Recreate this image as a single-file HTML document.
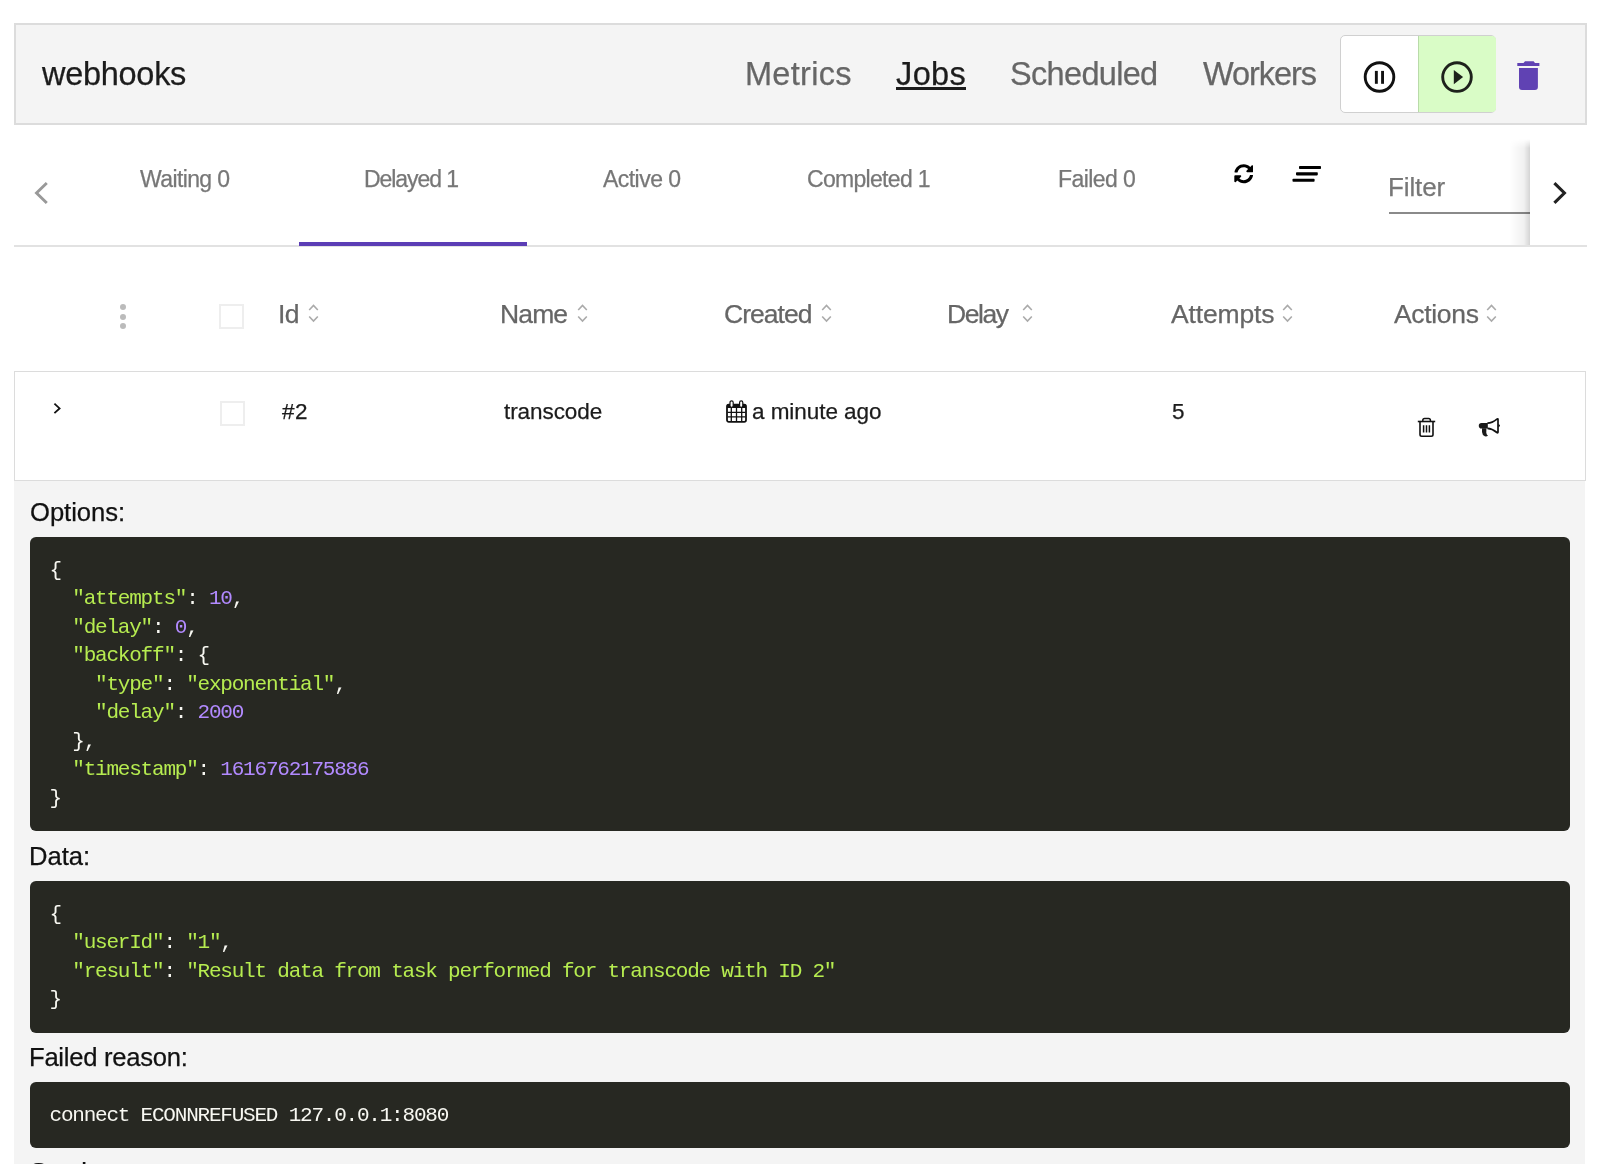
<!DOCTYPE html>
<html><head><meta charset="utf-8"><title>webhooks - Jobs</title>
<style>
html,body{margin:0;padding:0;background:#fff;width:1600px;height:1164px;overflow:hidden;position:relative;font-family:"Liberation Sans", sans-serif;}
</style></head><body>
<div style="position:absolute;left:14px;top:23px;width:1573px;height:102px;box-sizing:border-box;background:#f4f4f4;border:2px solid #dcdcdc;"></div>
<div style="position:absolute;left:41.50px;top:73.94px;font-size:32.5px;line-height:0;color:#1c1c1c;white-space:pre;letter-spacing:-0.286px;will-change:transform;-webkit-text-stroke:0.25px #1c1c1c;">webhooks</div>
<div style="position:absolute;left:744.90px;top:74.14px;font-size:32.5px;line-height:0;color:#666;white-space:pre;letter-spacing:0.300px;will-change:transform;-webkit-text-stroke:0.25px #666;">Metrics</div>
<div style="position:absolute;left:896.20px;top:74.14px;font-size:32.5px;line-height:0;color:#1c1c1c;white-space:pre;letter-spacing:0.400px;will-change:transform;-webkit-text-stroke:0.25px #1c1c1c;">Jobs</div>
<div style="position:absolute;left:896px;top:87px;width:70px;height:3px;background:#1c1c1c;"></div>
<div style="position:absolute;left:1009.60px;top:74.14px;font-size:32.5px;line-height:0;color:#666;white-space:pre;letter-spacing:-0.675px;will-change:transform;-webkit-text-stroke:0.25px #666;">Scheduled</div>
<div style="position:absolute;left:1202.90px;top:74.14px;font-size:32.5px;line-height:0;color:#666;white-space:pre;letter-spacing:-1.050px;will-change:transform;-webkit-text-stroke:0.25px #666;">Workers</div>
<div style="position:absolute;left:1340px;top:35px;width:156px;height:78px;box-sizing:border-box;border:1px solid #d0d0d0;border-radius:5px;background:#fff;overflow:hidden;"></div>
<div style="position:absolute;left:1418px;top:36px;width:77px;height:76px;background:#d9fcc6;border-left:1px solid #b9dba9;border-radius:0 4px 4px 0;"></div>
<svg style="position:absolute;left:1340px;top:35px" width="160" height="80" viewBox="0 0 160 80">
<circle cx="39.5" cy="42" r="14.3" fill="none" stroke="#111" stroke-width="2.9"/>
<rect x="34.9" y="35.9" width="2.9" height="12.9" fill="#111"/>
<rect x="41.1" y="35.9" width="2.9" height="12.9" fill="#111"/>
<circle cx="117" cy="42.1" r="14.3" fill="none" stroke="#1e211c" stroke-width="2.9"/>
<path d="M113.8 35.1 L123.1 42.1 L113.8 49.2 Z" fill="#1e211c"/>
</svg>
<svg style="position:absolute;left:1510px;top:55px" width="40" height="40" viewBox="0 0 40 40">
<path d="M7.3 8.1 H13.5 L15 6.2 H23.6 L25 8.1 H29.4 V11 H7.3 Z" fill="#6042b3"/>
<path d="M9 12.9 H27.9 V31.9 Q27.9 34.9 24.9 34.9 H12 Q9 34.9 9 31.9 Z" fill="#6042b3"/>
</svg>
<div style="position:absolute;left:140.30px;top:178.53px;font-size:23px;line-height:0;color:#777;white-space:pre;letter-spacing:-0.625px;will-change:transform;-webkit-text-stroke:0.25px #777;">Waiting 0</div>
<div style="position:absolute;left:364.10px;top:178.53px;font-size:23px;line-height:0;color:#777;white-space:pre;letter-spacing:-1.075px;will-change:transform;-webkit-text-stroke:0.25px #777;">Delayed 1</div>
<div style="position:absolute;left:602.60px;top:178.53px;font-size:23px;line-height:0;color:#777;white-space:pre;letter-spacing:-0.543px;will-change:transform;-webkit-text-stroke:0.25px #777;">Active 0</div>
<div style="position:absolute;left:806.50px;top:178.53px;font-size:23px;line-height:0;color:#777;white-space:pre;letter-spacing:-0.690px;will-change:transform;-webkit-text-stroke:0.25px #777;">Completed 1</div>
<div style="position:absolute;left:1058.30px;top:178.53px;font-size:23px;line-height:0;color:#777;white-space:pre;letter-spacing:-0.571px;will-change:transform;-webkit-text-stroke:0.25px #777;">Failed 0</div>
<div style="position:absolute;left:14px;top:245px;width:1573px;height:2px;background:#e2e2e2;"></div>
<div style="position:absolute;left:299px;top:242px;width:228px;height:4px;background:#5b3db5;"></div>
<svg style="position:absolute;left:30px;top:178px" width="24" height="30" viewBox="0 0 24 30">
<path d="M16.8 5 L6.5 15 L16.8 25" fill="none" stroke="#999" stroke-width="2.9"/>
</svg>
<svg style="position:absolute;left:1233.5px;top:164px" width="19.5" height="19.5" viewBox="0 0 512 512">
<path fill="#000" d="M370.72 133.28C339.458 104.008 298.888 87.962 255.848 88c-77.458.068-144.328 53.178-162.791 126.85-1.344 5.363-6.122 9.15-11.651 9.15H24.103c-7.498 0-13.194-6.807-11.807-14.176C33.933 94.924 134.813 8 256 8c66.448 0 126.791 26.136 171.315 68.685L463.03 40.97C478.149 25.851 504 36.559 504 57.941V192c0 13.255-10.745 24-24 24H345.941c-21.382 0-32.09-25.851-16.971-40.971l41.75-41.749zM32 296h134.059c21.382 0 32.09 25.851 16.971 40.971l-41.75 41.75c31.262 29.273 71.835 45.319 114.876 45.28 77.418-.07 144.315-53.144 162.787-126.849 1.344-5.363 6.122-9.15 11.651-9.150h57.304c7.498 0 13.194 6.807 11.807 14.176C478.067 417.076 377.187 504 256 504c-66.448 0-126.791-26.136-171.315-68.685L48.97 471.03C33.851 486.149 8 475.441 8 454.059V320c0-13.255 10.745-24 24-24z"/>
</svg>
<svg style="position:absolute;left:1290px;top:164px" width="34" height="20" viewBox="0 0 34 20">
<rect x="9" y="2.1" width="22" height="2.9" rx="0.8" fill="#000"/>
<rect x="6" y="8.3" width="21.8" height="3.1" rx="0.8" fill="#000"/>
<rect x="2.5" y="14.7" width="22.1" height="3.1" rx="0.8" fill="#000"/>
</svg>
<div style="position:absolute;left:1388.10px;top:187.09px;font-size:26px;line-height:0;color:#777;white-space:pre;letter-spacing:-0.120px;will-change:transform;-webkit-text-stroke:0.25px #777;">Filter</div>
<div style="position:absolute;left:1389px;top:212px;width:141px;height:2px;background:#8a8a8a;"></div>
<div style="position:absolute;left:1510px;top:139px;width:20px;height:106px;background:linear-gradient(to right, rgba(0,0,0,0), rgba(0,0,0,0.06) 70%, rgba(0,0,0,0.17));-webkit-mask-image:linear-gradient(to bottom, transparent 0, #000 9px);"></div>
<div style="position:absolute;left:1530px;top:139px;width:57px;height:106px;background:#fff;"></div>
<svg style="position:absolute;left:1546px;top:178px" width="24" height="30" viewBox="0 0 24 30">
<path d="M8.4 5.2 L18.4 15 L8.4 24.8" fill="none" stroke="#222" stroke-width="3.1"/>
</svg>
<div style="position:absolute;left:120.2px;top:304.0px;width:6px;height:6px;border-radius:50%;background:#bbb"></div>
<div style="position:absolute;left:120.2px;top:313.5px;width:6px;height:6px;border-radius:50%;background:#bbb"></div>
<div style="position:absolute;left:120.2px;top:322.8px;width:6px;height:6px;border-radius:50%;background:#bbb"></div>
<div style="position:absolute;left:218.5px;top:304px;width:25px;height:25px;box-sizing:border-box;border:2.5px solid #eee;"></div>
<div style="position:absolute;left:278.40px;top:313.82px;font-size:26.5px;line-height:0;color:#666;white-space:pre;letter-spacing:-0.700px;will-change:transform;-webkit-text-stroke:0.25px #666;">Id</div>
<svg style="position:absolute;left:307.5px;top:303px" width="11" height="21" viewBox="0 0 11 21"><path d="M1.2 7 L5.5 2.5 L9.8 7 M1.2 13.5 L5.5 18 L9.8 13.5" fill="none" stroke="#aaa" stroke-width="1.6"/></svg>
<div style="position:absolute;left:500.30px;top:313.82px;font-size:26.5px;line-height:0;color:#666;white-space:pre;letter-spacing:-0.867px;will-change:transform;-webkit-text-stroke:0.25px #666;">Name</div>
<svg style="position:absolute;left:577px;top:303px" width="11" height="21" viewBox="0 0 11 21"><path d="M1.2 7 L5.5 2.5 L9.8 7 M1.2 13.5 L5.5 18 L9.8 13.5" fill="none" stroke="#aaa" stroke-width="1.6"/></svg>
<div style="position:absolute;left:724.20px;top:313.82px;font-size:26.5px;line-height:0;color:#666;white-space:pre;letter-spacing:-0.983px;will-change:transform;-webkit-text-stroke:0.25px #666;">Created</div>
<svg style="position:absolute;left:820.5px;top:303px" width="11" height="21" viewBox="0 0 11 21"><path d="M1.2 7 L5.5 2.5 L9.8 7 M1.2 13.5 L5.5 18 L9.8 13.5" fill="none" stroke="#aaa" stroke-width="1.6"/></svg>
<div style="position:absolute;left:946.50px;top:313.82px;font-size:26.5px;line-height:0;color:#666;white-space:pre;letter-spacing:-1.450px;will-change:transform;-webkit-text-stroke:0.25px #666;">Delay</div>
<svg style="position:absolute;left:1021.5px;top:303px" width="11" height="21" viewBox="0 0 11 21"><path d="M1.2 7 L5.5 2.5 L9.8 7 M1.2 13.5 L5.5 18 L9.8 13.5" fill="none" stroke="#aaa" stroke-width="1.6"/></svg>
<div style="position:absolute;left:1170.80px;top:313.82px;font-size:26.5px;line-height:0;color:#666;white-space:pre;letter-spacing:-0.157px;will-change:transform;-webkit-text-stroke:0.25px #666;">Attempts</div>
<svg style="position:absolute;left:1282px;top:303px" width="11" height="21" viewBox="0 0 11 21"><path d="M1.2 7 L5.5 2.5 L9.8 7 M1.2 13.5 L5.5 18 L9.8 13.5" fill="none" stroke="#aaa" stroke-width="1.6"/></svg>
<div style="position:absolute;left:1394.00px;top:313.82px;font-size:26.5px;line-height:0;color:#666;white-space:pre;letter-spacing:-0.333px;will-change:transform;-webkit-text-stroke:0.25px #666;">Actions</div>
<svg style="position:absolute;left:1486px;top:303px" width="11" height="21" viewBox="0 0 11 21"><path d="M1.2 7 L5.5 2.5 L9.8 7 M1.2 13.5 L5.5 18 L9.8 13.5" fill="none" stroke="#aaa" stroke-width="1.6"/></svg>
<div style="position:absolute;left:14px;top:371px;width:1571.5px;height:110px;box-sizing:border-box;border:1.5px solid #dcdcdc;background:#fff;"></div>
<svg style="position:absolute;left:50px;top:400px" width="14" height="17" viewBox="0 0 14 17">
<path d="M4.4 3.6 L9.6 8.4 L4.4 13.2" fill="none" stroke="#111" stroke-width="1.8"/>
</svg>
<div style="position:absolute;left:220px;top:400.6px;width:25px;height:25px;box-sizing:border-box;border:2.5px solid #eee;"></div>
<div style="position:absolute;left:281.60px;top:411.60px;font-size:22.5px;line-height:0;color:#1c1c1c;white-space:pre;letter-spacing:0.400px;will-change:transform;-webkit-text-stroke:0.25px #1c1c1c;">#2</div>
<div style="position:absolute;left:504.10px;top:411.60px;font-size:22.5px;line-height:0;color:#1c1c1c;white-space:pre;letter-spacing:-0.075px;will-change:transform;-webkit-text-stroke:0.25px #1c1c1c;">transcode</div>
<div style="position:absolute;left:751.70px;top:411.60px;font-size:22.5px;line-height:0;color:#1c1c1c;white-space:pre;letter-spacing:-0.055px;will-change:transform;-webkit-text-stroke:0.25px #1c1c1c;">a minute ago</div>
<div style="position:absolute;left:1172.00px;top:411.60px;font-size:22.5px;line-height:0;color:#1c1c1c;white-space:pre;letter-spacing:0.000px;will-change:transform;-webkit-text-stroke:0.25px #1c1c1c;">5</div>
<svg style="position:absolute;left:726px;top:400px" width="21" height="23" viewBox="0 0 21 23">
<rect x="1" y="4.6" width="19" height="17.2" rx="1.8" fill="none" stroke="#111" stroke-width="1.8"/>
<rect x="1" y="4.6" width="19" height="3.4" fill="#111"/>
<path d="M5.3 7.5 V21 M10.5 7.5 V21 M15.7 7.5 V21 M1.5 12.3 H19.5 M1.5 16.8 H19.5" stroke="#111" stroke-width="1.3"/>
<rect x="4" y="0.8" width="3.2" height="6.6" rx="1.6" fill="#fff" stroke="#111" stroke-width="1.2"/>
<rect x="13.6" y="0.8" width="3.2" height="6.6" rx="1.6" fill="#fff" stroke="#111" stroke-width="1.2"/>
</svg>
<svg style="position:absolute;left:1416px;top:416px" width="21" height="22" viewBox="0 0 21 22">
<path d="M1.8 5.5 H19.2" stroke="#111" stroke-width="1.6"/>
<path d="M6.8 5.3 V4.2 Q6.8 2.4 8.6 2.4 H12.6 Q14.4 2.4 14.4 4.2 V5.3" fill="none" stroke="#111" stroke-width="1.5"/>
<path d="M4 6 V18.6 Q4 20.3 5.7 20.3 H15.3 Q17 20.3 17 18.6 V6" fill="none" stroke="#111" stroke-width="1.6"/>
<path d="M7.6 9.2 V16.6 M10.5 9.2 V16.6 M13.4 9.2 V16.6" stroke="#111" stroke-width="1.5"/>
</svg>
<svg style="position:absolute;left:1477px;top:416px" width="26" height="22" viewBox="0 0 26 22">
<path d="M4.5 6.9 H10.8 V12.5 H4.5 Q1.8 12.5 1.8 9.7 Q1.8 6.9 4.5 6.9 Z" fill="#1a1a1a"/>
<path d="M5 12.3 H9.4 L9.3 16.8 Q9.5 18.9 11 19.8 Q9.6 20.7 7.8 20.3 Q5.3 19.4 5 16 Z" fill="#1a1a1a"/>
<path d="M10.4 7.1 C13.8 7.1 17.4 5.2 19.9 3.1 Q21 2.2 21 3.6 V16 Q21 17.3 19.9 16.5 C17.4 14.4 14 12.5 10.4 12.4" fill="none" stroke="#111" stroke-width="1.7" stroke-linejoin="round"/>
<path d="M21.4 8.1 Q24.6 9.7 21.4 11.3 Z" fill="#111"/>
</svg>
<div style="position:absolute;left:14px;top:481px;width:1571px;height:700px;background:#f4f4f4;"></div>
<div style="position:absolute;left:29.90px;top:511.83px;font-size:25.6px;line-height:0;color:#111;white-space:pre;letter-spacing:-0.029px;will-change:transform;-webkit-text-stroke:0.25px #111;">Options:</div>
<div style="position:absolute;left:29.00px;top:855.93px;font-size:25.6px;line-height:0;color:#111;white-space:pre;letter-spacing:-0.025px;will-change:transform;-webkit-text-stroke:0.25px #111;">Data:</div>
<div style="position:absolute;left:29.25px;top:1057.13px;font-size:25.6px;line-height:0;color:#111;white-space:pre;letter-spacing:-0.250px;will-change:transform;-webkit-text-stroke:0.25px #111;">Failed reason:</div>
<div style="position:absolute;left:30.25px;top:1171.73px;font-size:25.6px;line-height:0;color:#111;white-space:pre;letter-spacing:0.000px;will-change:transform;-webkit-text-stroke:0.25px #111;">Stacktrace:</div>
<pre style="position:absolute;left:30px;width:1540px;box-sizing:border-box;margin:0;background:#272822;border-radius:6px;padding:19.8px 19.5px 0;font-family:'Liberation Mono', monospace;font-size:21px;letter-spacing:-1.215px;line-height:28.5px;white-space:pre;color:#f8f8f2;will-change:transform;top:537px;height:294px;"><span style="color:#f8f8f2">{</span>
  <span style="color:#b6ec50">"attempts"</span><span style="color:#f8f8f2">: </span><span style="color:#b28aff">10</span><span style="color:#f8f8f2">,</span>
  <span style="color:#b6ec50">"delay"</span><span style="color:#f8f8f2">: </span><span style="color:#b28aff">0</span><span style="color:#f8f8f2">,</span>
  <span style="color:#b6ec50">"backoff"</span><span style="color:#f8f8f2">: {</span>
    <span style="color:#b6ec50">"type"</span><span style="color:#f8f8f2">: </span><span style="color:#b6ec50">"exponential"</span><span style="color:#f8f8f2">,</span>
    <span style="color:#b6ec50">"delay"</span><span style="color:#f8f8f2">: </span><span style="color:#b28aff">2000</span>
  <span style="color:#f8f8f2">},</span>
  <span style="color:#b6ec50">"timestamp"</span><span style="color:#f8f8f2">: </span><span style="color:#b28aff">1616762175886</span>
<span style="color:#f8f8f2">}</span></pre>
<pre style="position:absolute;left:30px;width:1540px;box-sizing:border-box;margin:0;background:#272822;border-radius:6px;padding:19.8px 19.5px 0;font-family:'Liberation Mono', monospace;font-size:21px;letter-spacing:-1.215px;line-height:28.5px;white-space:pre;color:#f8f8f2;will-change:transform;top:880.5px;height:151.7px;"><span style="color:#f8f8f2">{</span>
  <span style="color:#b6ec50">"userId"</span><span style="color:#f8f8f2">: </span><span style="color:#b6ec50">"1"</span><span style="color:#f8f8f2">,</span>
  <span style="color:#b6ec50">"result"</span><span style="color:#f8f8f2">: </span><span style="color:#b6ec50">"Result data from task performed for transcode with ID 2"</span>
<span style="color:#f8f8f2">}</span></pre>
<pre style="position:absolute;left:30px;width:1540px;box-sizing:border-box;margin:0;background:#272822;border-radius:6px;padding:19.8px 19.5px 0;font-family:'Liberation Mono', monospace;font-size:21px;letter-spacing:-1.215px;line-height:28.5px;white-space:pre;color:#f8f8f2;will-change:transform;top:1082.2px;height:65.6px;"><span style="color:#f8f8f2">connect ECONNREFUSED 127.0.0.1:8080</span></pre>
</body></html>
